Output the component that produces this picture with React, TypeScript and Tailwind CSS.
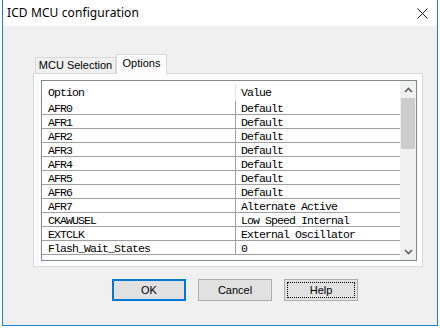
const rows: [string, string][] = [
  ['AFR0', 'Default'],
  ['AFR1', 'Default'],
  ['AFR2', 'Default'],
  ['AFR3', 'Default'],
  ['AFR4', 'Default'],
  ['AFR5', 'Default'],
  ['AFR6', 'Default'],
  ['AFR7', 'Alternate Active'],
  ['CKAWUSEL', 'Low Speed Internal'],
  ['EXTCLK', 'External Oscillator'],
  ['Flash_Wait_States', '0'],
];

const mono = "font-['Liberation_Mono',monospace] text-[11.5px] tracking-[-0.9px] text-black";
const ui = "font-['Liberation_Sans',Arial,sans-serif] text-[11px] text-black";

function Chevron({ down }: { down?: boolean }) {
  return (
    <svg width="9" height="6" viewBox="0 0 9 6" className={down ? 'rotate-180' : ''}>
      <path d="M1 5 L4.5 1.5 L8 5" fill="none" stroke="#606060" strokeWidth="1.6" />
    </svg>
  );
}

export default function App() {
  return (
    <div className="w-[440px] h-[329px] bg-white overflow-hidden">
      <div className="ml-[2px] w-[436px] h-[326px] border-x border-b border-[#1883d7] flex flex-col">
        {/* Title bar */}
        <div className="h-[26px] bg-white flex items-center justify-between pl-[4px] pr-[9px]">
          <span className="font-['Noto_Sans',sans-serif] text-[12px] text-black tracking-[0.1px]">
            ICD MCU configuration
          </span>
          <svg width="11" height="11" viewBox="0 0 11 11">
            <path d="M0.5 0.5 L10.5 10.5 M10.5 0.5 L0.5 10.5" stroke="#111" strokeWidth="1" />
          </svg>
        </div>

        {/* Body */}
        <div className="flex-1 bg-[#f0f0f0] pl-[30px] pr-[14px] pt-[28px]">
          {/* Tabs */}
          <div className="flex items-end pl-[2px] h-[19px]">
            <div className={`${ui} w-[81px] h-[16px] border border-b-0 border-[#d9d9d9] bg-[#f0f0f0] flex items-center justify-center`}>
              MCU Selection
            </div>
            <div className={`${ui} w-[51px] h-[20px] -mb-px relative z-10 border border-b-0 border-[#d9d9d9] bg-[#fcfcfc] flex items-center justify-center pb-[2px]`}>
              Options
            </div>
          </div>

          {/* Panel */}
          <div className="w-[390px] h-[194px] border border-[#d9d9d9] bg-[#fcfcfc] pl-[7px] pt-[6px]">
            <div className="w-[376px] h-[181px] border border-[#828790] bg-white flex">
              <div className="flex-1 flex flex-col">
                <div className="h-[20px] flex">
                  <div className={`${mono} w-[193px] pl-[6px] pt-[6px] leading-[12px]`}>Option</div>
                  <div className="w-px h-[17px] self-end bg-[#e5e5e5]" />
                  <div className={`${mono} pl-[5px] pt-[6px] leading-[12px]`}>Value</div>
                </div>
                {rows.map(([opt, val]) => (
                  <div key={opt} className="h-[14px] flex border-b border-[#a0a0a0]">
                    <div className={`${mono} w-[193px] pl-[6px] pt-[3px] leading-[10px]`}>{opt}</div>
                    <div className="w-px bg-[#a0a0a0]" />
                    <div className={`${mono} pl-[5px] pt-[3px] leading-[10px]`}>{val}</div>
                  </div>
                ))}
              </div>
              {/* Scrollbar */}
              <div className="w-[16px] bg-[#f0f0f0] flex flex-col">
                <div className="h-[17px] flex items-center justify-center">
                  <Chevron />
                </div>
                <div className="mx-px h-[51px] bg-[#cdcdcd]" />
                <div className="flex-1" />
                <div className="h-[17px] flex items-center justify-center">
                  <Chevron down />
                </div>
              </div>
            </div>
          </div>

          {/* Buttons */}
          <div className="flex gap-[12px] pl-[79px] mt-[12px]">
            <button className={`${ui} w-[74px] h-[22px] bg-[#e1e1e1] border-2 border-[#0078d7]`}>OK</button>
            <button className={`${ui} w-[74px] h-[22px] bg-[#e1e1e1] border border-[#adadad]`}>Cancel</button>
            <button className={`${ui} w-[74px] h-[22px] bg-[#e1e1e1] border border-[#adadad] p-[2px]`}>
              <div className="w-full h-full border border-dotted border-black flex items-center justify-center">
                Help
              </div>
            </button>
          </div>
        </div>
      </div>
    </div>
  );
}
